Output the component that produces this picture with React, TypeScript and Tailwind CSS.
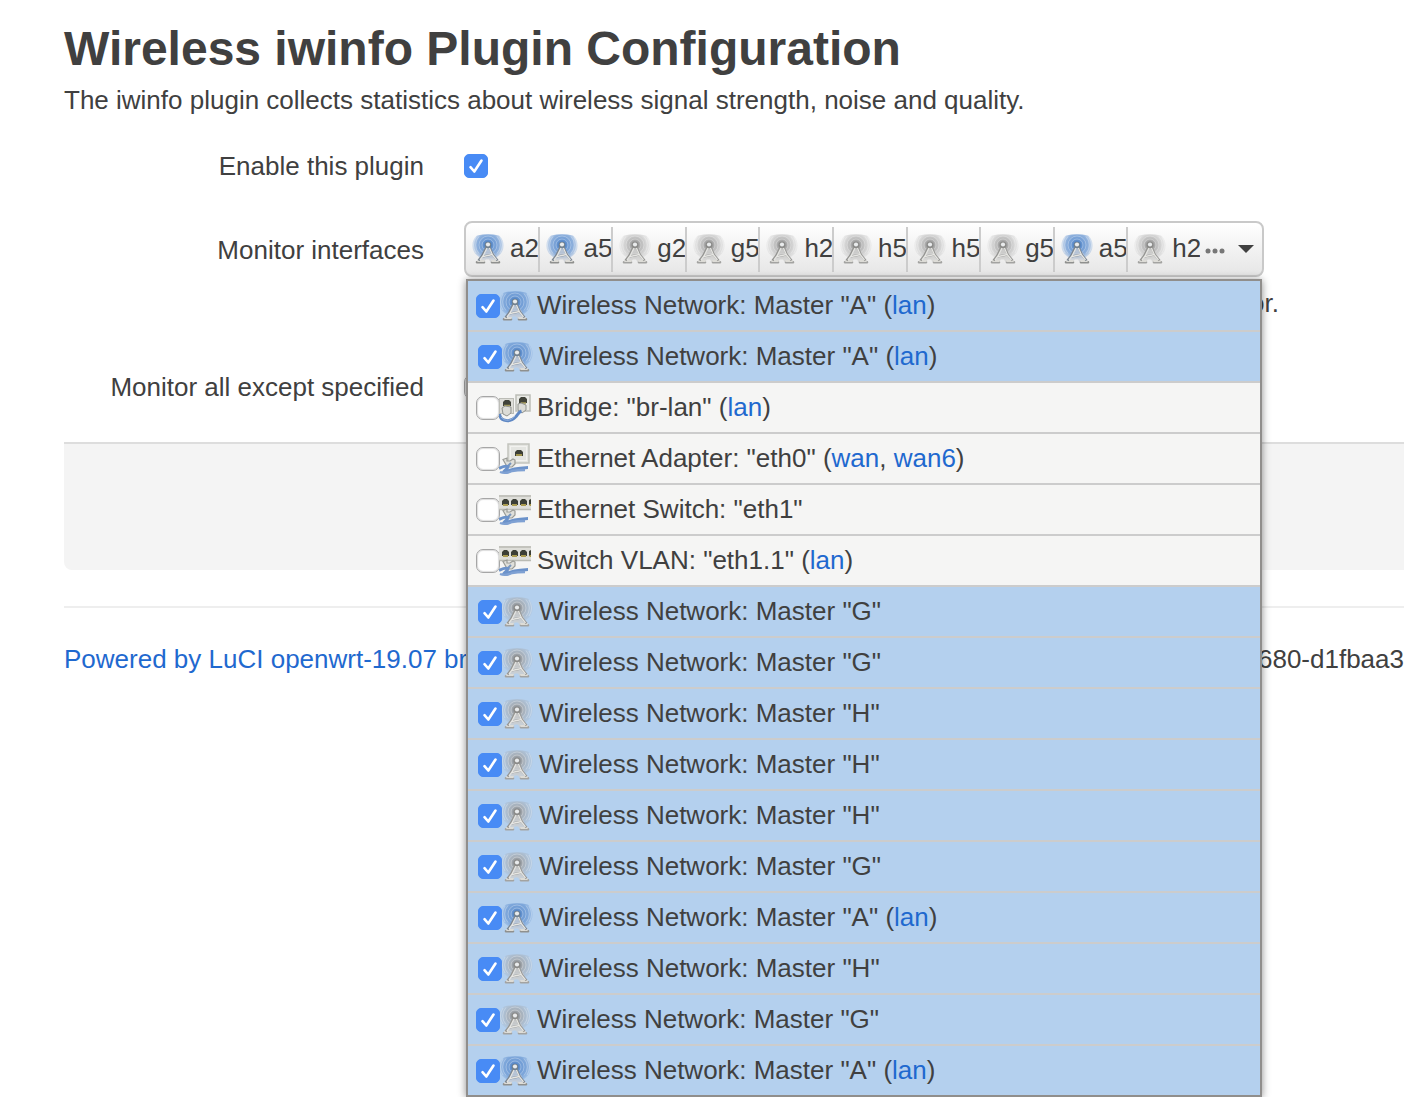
import { useId } from "react";

type IconKind = "wifi" | "wifi-off" | "bridge" | "ethernet" | "switch";

function Tower({ active }: { active: boolean }) {
  const id = useId();
  const core = active ? "#2f66ad" : "#666666";
  const mid = active ? "#6d9ad4" : "#a0a0a0";
  return (
    <svg viewBox="0 0 32 32" className="size-8 shrink-0" fill="none" aria-hidden="true">
      <defs>
        <radialGradient id={id} gradientUnits="userSpaceOnUse" cx="16" cy="12" r="16">
          <stop offset="0" stopColor={core} />
          <stop offset="0.35" stopColor={mid} stopOpacity={active ? 1 : 0.75} />
          <stop offset="0.7" stopColor={mid} stopOpacity={active ? 0.75 : 0.35} />
          <stop offset="1" stopColor={mid} stopOpacity={active ? 0.2 : 0.1} />
        </radialGradient>
      </defs>
      <path
        d="M5 2.500C-1.200 7 -1.200 18 5 22.500L9 25.500H23L27 22.500C33.200 18 33.200 7 27 2.500Q16 .2 5 2.500Z"
        fill={`url(#${id})`}
      />
      <g stroke="#fff" strokeOpacity=".28" strokeWidth="1">
        <circle cx="16" cy="12" r="6" />
        <circle cx="16" cy="12" r="9" />
        <path d="M7 3.500a12.500 12.500 0 0 0 0 17M25 3.500a12.500 12.500 0 0 1 0 17" />
        <path d="M4 4a15 15 0 0 0 0 16M28 4a15 15 0 0 1 0 16" />
      </g>
      <path
        d="M14 12h4l1.500 6 3 2.500.5 3 3.500 3.500 1 2.500H19l-2-3h-3l-3 3H4.500l1-2.500L9 24.500l2-5Z"
        fill={active ? "#c9ced4" : "#cfcfcd"}
        fillOpacity=".75"
      />
      <path
        d="M5 29.200H12M20 29.200H27"
        stroke={active ? "#8f908e" : "#a3a3a1"}
        strokeWidth="2.600"
        strokeLinecap="round"
      />
      <path d="M6 28H12M20 28H26" stroke="#dddcd7" strokeWidth="1.800" strokeLinecap="round" />
      <path
        d="M15 13 10 23 6.500 27.500M17 13l4 9 4.500 5.500M10.500 23.500l10.500-2"
        stroke={active ? "#7b8590" : "#959593"}
        strokeWidth="2.200"
      />
      <path d="M16 13 11 23 8 27M16.500 13l4 9 4 5M11 23.500 20.500 21.500" stroke="#e6e6e3" strokeWidth="1.300" />
      <circle cx="16" cy="12" r="3.200" fill={active ? "#71818f" : "#8a8a88"} />
      <circle cx="16" cy="11.500" r="2.100" fill="#e9ebec" />
    </svg>
  );
}

function Cable() {
  return (
    <>
      <path d="M4 16.500l4-1.500v3h3l3-2 2 1v4l-3 3H8l-2-4Z" fill="#dfdfda" stroke="#999b96" strokeWidth="1.200" />
      <path d="M8 24l4-4" stroke="#7795bd" strokeWidth="2" />
      <path d="M0 25.500c4-2 7-3 9-2 0 2-3 3-4 5 5 0 8-3 14-3 4 0 6-1 10-1" stroke="#6b92ca" strokeWidth="3" />
      <path d="M1 29c5 2 8 1 12-1 5-1 9-1 13-1" stroke="#7fa1d3" strokeWidth="2.400" />
    </>
  );
}

function DeviceIcon({ kind }: { kind: IconKind }) {
  if (kind === "wifi" || kind === "wifi-off") return <Tower active={kind === "wifi"} />;
  if (kind === "bridge")
    return (
      <svg viewBox="0 0 32 32" className="size-8 shrink-0" fill="none" aria-hidden="true">
        <rect x="0.500" y="6.500" width="14" height="15" fill="#deded9" stroke="#bcbdb7" />
        <rect x="17" y="3" width="14" height="16" fill="#e9eae6" stroke="#bcbdb7" strokeWidth="1.500" />
        <path d="M4 14v-4l2-2h4l2 2v4Z" fill="#41433a" />
        <path d="M20 11V7l2-2h4l2 2v4Z" fill="#41433a" />
        <path d="M5 13.500h6M22 11h5" stroke="#a59a58" strokeWidth="1.400" />
        <path d="M3 16l3-2 6 1v6l-4 3-4-2Z" fill="#dcdcd7" stroke="#91938e" />
        <path d="M19 12l3-1 5 2v5l-4 3-4-3Z" fill="#dcdcd7" stroke="#91938e" />
        <path d="M0.500 22c1 8 11 8.500 16 3 2-2 3-5 6-6" stroke="#5f88c4" strokeWidth="3" />
        <path d="M2 25c4 5 10 4 14-1" stroke="#92b1de" />
      </svg>
    );
  if (kind === "ethernet")
    return (
      <svg viewBox="0 0 32 32" className="size-8 shrink-0" fill="none" aria-hidden="true">
        <rect x="9" y="1" width="21" height="19" fill="#e4e5e1" stroke="#c2c3bd" strokeWidth="1.500" />
        <rect x="11.500" y="3.500" width="16" height="14" stroke="#f2f2ef" />
        <path d="M16 13V9l2-2h4l2 2v4Z" fill="#3c3f36" />
        <path d="M17 12h6" stroke="#ab9c50" strokeWidth="1.800" />
        <Cable />
      </svg>
    );
  return (
    <svg viewBox="0 0 32 32" className="size-8 shrink-0" fill="none" aria-hidden="true">
      <path d="M0 1h32v15H0Z" fill="#deded9" />
      <path d="M0 2h32M0 15.500h32" stroke="#babbb4" strokeWidth="1.500" />
      <path
        d="M3 11V7l2-2h3l2 2v4ZM12 11V7l2-2h3l2 2v4ZM21 11V7l2-2h3l2 2v4ZM30 11V6l2-1v6Z"
        fill="#3c3f36"
      />
      <path d="M4 11h5M13 11h5M22 11h5M30.500 11h2" stroke="#ab9c50" strokeWidth="1.800" />
      <Cable />
    </svg>
  );
}

function Check({ id, checked, label }: { id: string; checked: boolean; label?: string }) {
  return (
    <span className="grid size-6 shrink-0">
      <input
        id={id}
        type="checkbox"
        defaultChecked={checked}
        aria-label={label}
        className="peer col-start-1 row-start-1 size-6 appearance-none rounded-[7px] border border-[#a6a6a6] bg-white shadow-[inset_0_0_1px_1px_#dddddd] checked:rounded-[5px] checked:border-[#488bf5] checked:bg-[#488bf5] checked:shadow-none"
      />
      <svg
        viewBox="0 0 24 24"
        className="pointer-events-none invisible col-start-1 row-start-1 size-6 peer-checked:visible"
        fill="none"
        stroke="#fff"
        strokeWidth="2.600"
        strokeLinecap="round"
        strokeLinejoin="round"
        aria-hidden="true"
      >
        <path d="M6.500 13.200 10.300 17.500 17.500 6.500" />
      </svg>
    </span>
  );
}

const chips: { name: string; active: boolean }[] = [
  { name: "a2", active: true },
  { name: "a5", active: true },
  { name: "g2", active: false },
  { name: "g5", active: false },
  { name: "h2", active: false },
  { name: "h5", active: false },
  { name: "h5", active: false },
  { name: "g5", active: false },
  { name: "a5", active: true },
  { name: "h2", active: false },
];

type Device = { kind: IconKind; name: string; networks?: string[]; checked: boolean };

const master = (letter: string, lan = false): Device => ({
  kind: lan ? "wifi" : "wifi-off",
  name: `Wireless Network: Master "${letter}"`,
  networks: lan ? ["lan"] : undefined,
  checked: true,
});

const devices: Device[] = [
  master("A", true),
  master("A", true),
  { kind: "bridge", name: 'Bridge: "br-lan"', networks: ["lan"], checked: false },
  { kind: "ethernet", name: 'Ethernet Adapter: "eth0"', networks: ["wan", "wan6"], checked: false },
  { kind: "switch", name: 'Ethernet Switch: "eth1"', checked: false },
  { kind: "switch", name: 'Switch VLAN: "eth1.1"', networks: ["lan"], checked: false },
  master("G"),
  master("G"),
  master("H"),
  master("H"),
  master("H"),
  master("G"),
  master("A", true),
  master("H"),
  master("G"),
  master("A", true),
];

function DeviceRow({ device, index }: { device: Device; index: number }) {
  const inset = device.checked && index > 0 && index < 14;
  return (
    <li
      className={`flex h-[51px] items-center border-b-2 border-[#cccccc] pr-2 last:h-[49px] last:border-b-0 ${
        device.checked ? "bg-[#b4d0ee]" : "bg-[#f5f5f4]"
      } ${inset ? "pl-2.5" : "pl-2"}`}
    >
      <Check id={`device-${index}`} checked={device.checked} label={device.name} />
      <span className="-ml-px flex">
        <DeviceIcon kind={device.kind} />
      </span>
      <span className="ml-1.5 pb-0.5 whitespace-nowrap">
        {device.name}
        {device.networks && (
          <>
            {" ("}
            {device.networks.map((n, i) => (
              <span key={n}>
                {i > 0 && ", "}
                <a href={`#${n}`} className="text-[#1f69cf]">
                  {n}
                </a>
              </span>
            ))}
            )
          </>
        )}
      </span>
    </li>
  );
}

export default function App() {
  return (
    <main className="overflow-hidden bg-white pt-[19px] pl-16 font-['Liberation_Sans',Arial,sans-serif] text-[26px] leading-9 text-[#404040]">
      <h1 className="text-[48px] leading-[60px] font-bold">Wireless iwinfo Plugin Configuration</h1>
      <p className="mt-[3px]">The iwinfo plugin collects statistics about wireless signal strength, noise and quality.</p>

      <form>
        <div className="mt-[30px] flex items-center gap-10">
          <label htmlFor="enable" className="w-[360px] text-right">
            Enable this plugin
          </label>
          <Check id="enable" checked />
        </div>

        <div className="mt-[37px] flex gap-10">
          <span id="interfaces-label" className="mt-[11px] w-[360px] shrink-0 text-right">
            Monitor interfaces
          </span>
          <div className="relative w-[800px] shrink-0">
            <button
              type="button"
              aria-labelledby="interfaces-label"
              aria-expanded="true"
              className="flex h-14 w-full items-center rounded-lg border-2 border-[#c9c9c9] bg-linear-to-b from-white to-[#e6e6e6] pr-2"
            >
              <span className="flex min-w-0 flex-1">
                {chips.map((chip, i) => (
                  <span
                    key={i}
                    className="flex h-[45px] min-w-0 flex-1 items-center gap-1.5 overflow-hidden border-r-2 border-[#cccccc] pl-1.5 last:border-r-0"
                  >
                    <Tower active={chip.active} />
                    <span className="pb-0.5">{chip.name}</span>
                  </span>
                ))}
              </span>
              <svg viewBox="0 0 22 12" className="ml-1 h-3 w-[22px]" fill="#777" aria-hidden="true">
                <circle cx="4" cy="8" r="2.500" />
                <circle cx="11" cy="8" r="2.500" />
                <circle cx="18" cy="8" r="2.500" />
              </svg>
              <svg viewBox="0 0 16 8" className="ml-3 h-2 w-4" fill="#404040" aria-hidden="true">
                <path d="M0 0h16L8 8Z" />
              </svg>
            </button>

            <ul className="absolute inset-x-0.5 top-[58px] z-10 border-2 border-[#908e8c] shadow-[0_1px_8px_rgba(0,0,0,0.45)]">
              {devices.map((device, i) => (
                <DeviceRow key={i} device={device} index={i} />
              ))}
            </ul>

            <p className="-mr-[15px] mt-2 text-right whitespace-nowrap">
              Leave unselected to automatically determine interfaces to monitor.
            </p>
          </div>
        </div>

        <div className="mt-12 flex items-center gap-10">
          <label htmlFor="except" className="w-[360px] text-right">
            Monitor all except specified
          </label>
          <Check id="except" checked={false} />
        </div>

        <div className="mt-[37px] h-32 rounded-bl-lg border-t-2 border-[#dddddd] bg-[#f4f4f4]" />
      </form>

      <footer className="mt-9 flex justify-between border-t-2 border-[#eeeeee] pt-[33px] pb-10 whitespace-nowrap">
        <a href="#luci" className="text-[#1f69cf]">
          Powered by LuCI openwrt-19.07 branch
        </a>
        <span>/ OpenWrt r10680-d1fbaa3</span>
      </footer>
      <div className="h-[380px]" />
    </main>
  );
}
